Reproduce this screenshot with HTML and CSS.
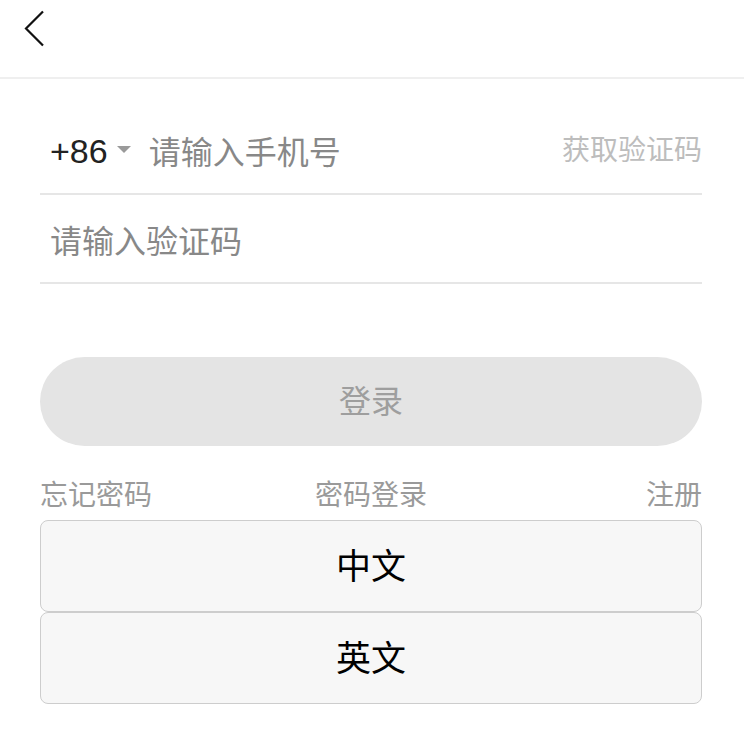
FILE: index.html
```html
<!DOCTYPE html>
<html lang="zh-CN">
<head>
<meta charset="utf-8">
<title>登录</title>
<link rel="stylesheet" href="styles.css">
</head>
<body>
<header class="topbar">
  <svg class="back" width="24" height="38" viewBox="0 0 24 38" aria-label="返回">
    <polyline points="20,1.5 3,18.5 20,35.5" fill="none" stroke="#111" stroke-width="2.2"/>
  </svg>
</header>
<main class="form">
  <div class="field phone">
    <span class="code">+86</span>
    <span class="caret"></span>
    <span class="placeholder">请输入手机号</span>
    <span class="getcode">获取验证码</span>
  </div>
  <div class="field">
    <span class="placeholder">请输入验证码</span>
  </div>
  <button class="login">登录</button>
  <nav class="links">
    <span class="link-left">忘记密码</span>
    <span class="link-center">密码登录</span>
    <span class="link-right">注册</span>
  </nav>
  <div class="langs">
    <div class="lang">中文</div>
    <div class="lang">英文</div>
  </div>
</main>
</body>
</html>
```

FILE: styles.css
```css
html, body {
  margin: 0;
  padding: 0;
  background: #fff;
  font-family: "Noto Sans CJK SC", "Noto Sans", sans-serif;
}

.topbar {
  border-bottom: 2px solid #efefef;
  display: flex;
  align-items: flex-start;
  padding: 10px 0 0 23px;
  box-sizing: border-box;
  height: 79px;
}

.back {
  display: block;
}

.form {
  padding: 27px 42px 0 40px;
}

.field {
  height: 87px;
  border-bottom: 2px solid #e6e6e6;
  display: flex;
  align-items: center;
  padding-left: 10px;
}

.code {
  font-family: "Liberation Sans", Arial, sans-serif;
  font-size: 34px;
  color: #222;
  line-height: 1;
  margin-top: 2px;
}

.caret {
  width: 0;
  height: 0;
  border-left: 7px solid transparent;
  border-right: 7px solid transparent;
  border-top: 7px solid #9a9a9a;
  margin: 0 18px 0 9px;
}

.placeholder {
  font-size: 32px;
  color: #888;
  line-height: 1;
}

.getcode {
  margin-left: auto;
  font-size: 28px;
  color: #bdbdbd;
  line-height: 1;
  margin-top: -4px;
}

.login {
  display: block;
  width: 100%;
  height: 89px;
  margin-top: 73px;
  border: none;
  border-radius: 45px;
  background: #e4e4e4;
  color: #9e9e9e;
  font-family: "Noto Sans CJK SC", sans-serif;
  font-size: 32px;
  padding: 0 0 6px;
}

.links {
  display: grid;
  grid-template-columns: 1fr auto 1fr;
  margin-top: 32px;
  font-size: 28px;
  line-height: 30px;
  color: #9a9a9a;
}

.link-left {
  justify-self: start;
}

.link-center {
  justify-self: center;
}

.link-right {
  justify-self: end;
}

.langs {
  margin-top: 12px;
}

.lang {
  height: 90px;
  border: 1px solid #cdcdcd;
  border-radius: 8px;
  background: #f7f7f7;
  display: flex;
  align-items: center;
  justify-content: center;
  font-size: 35px;
  color: #000;
  padding-bottom: 6px;
  box-sizing: border-box;
  height: 92px;
}
```
